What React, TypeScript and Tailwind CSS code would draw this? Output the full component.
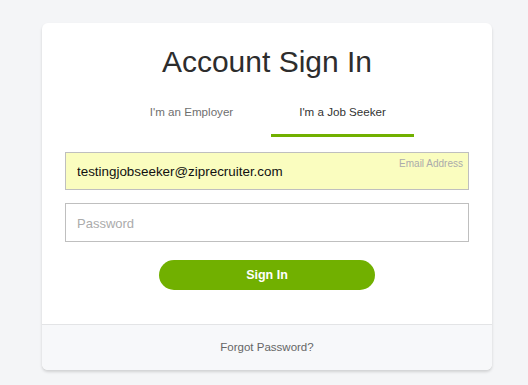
import { useState } from "react";

const font = { fontFamily: '"Liberation Sans", Arial, sans-serif' };

export default function App() {
  const [tab, setTab] = useState<"employer" | "seeker">("seeker");
  const [email, setEmail] = useState("testingjobseeker@ziprecruiter.com");
  const [password, setPassword] = useState("");

  return (
    <div className="min-h-[385px] bg-[#f4f5f7] pt-[23px]" style={font}>
      <div className="ml-[42px] w-[450px] overflow-hidden rounded-[6px] bg-white shadow-[0_2px_3px_rgba(0,0,0,0.15)]">
        <div className="px-[23px] pb-[34px]">
          <h1 className="pt-[22px] text-center text-[30px] leading-[34px] text-[#2d2d2d]">
            Account Sign In
          </h1>

          <div className="mt-[18px] flex justify-center gap-[8px]">
            <button
              onClick={() => setTab("employer")}
              className={`h-[40px] w-[143px] border-b-[3px] pb-[8px] text-[11.6px] ${
                tab === "employer"
                  ? "border-[#71b000] text-[#333]"
                  : "border-transparent text-[#6f6f6f]"
              }`}
            >
              I'm an Employer
            </button>
            <button
              onClick={() => setTab("seeker")}
              className={`h-[40px] w-[143px] border-b-[3px] pb-[8px] text-[11.6px] ${
                tab === "seeker"
                  ? "border-[#71b000] text-[#333]"
                  : "border-transparent text-[#6f6f6f]"
              }`}
            >
              I'm a Job Seeker
            </button>
          </div>

          <div className="mt-[15px] flex flex-col gap-[13px]">
            <div className="relative">
              <input
                value={email}
                onChange={(e) => setEmail(e.target.value)}
                className="h-[38px] w-full border border-[#bfbfbf] bg-[#fafdbf] pl-[11px] pt-[1px] text-[13.4px] text-[#111] outline-none"
              />
              <span className="pointer-events-none absolute right-[6px] top-[4px] text-[10px] text-[#ababab]">
                Email Address
              </span>
            </div>
            <input
              type="password"
              value={password}
              onChange={(e) => setPassword(e.target.value)}
              placeholder="Password"
              className="h-[39px] w-full border border-[#bfbfbf] bg-white pl-[11px] pt-[1px] text-[13px] text-[#111] outline-none placeholder:text-[#ababab]"
            />
          </div>

          <div className="mt-[18px] flex justify-center">
            <button className="h-[30px] w-[216px] rounded-full bg-[#71b000] text-[12.5px] font-bold text-white">
              Sign In
            </button>
          </div>
        </div>

        <div className="flex h-[46px] items-center justify-center border-t border-[#e3e4e6] bg-[#f7f8fa] text-[11.5px] text-[#666]">
          Forgot Password?
        </div>
      </div>
    </div>
  );
}
